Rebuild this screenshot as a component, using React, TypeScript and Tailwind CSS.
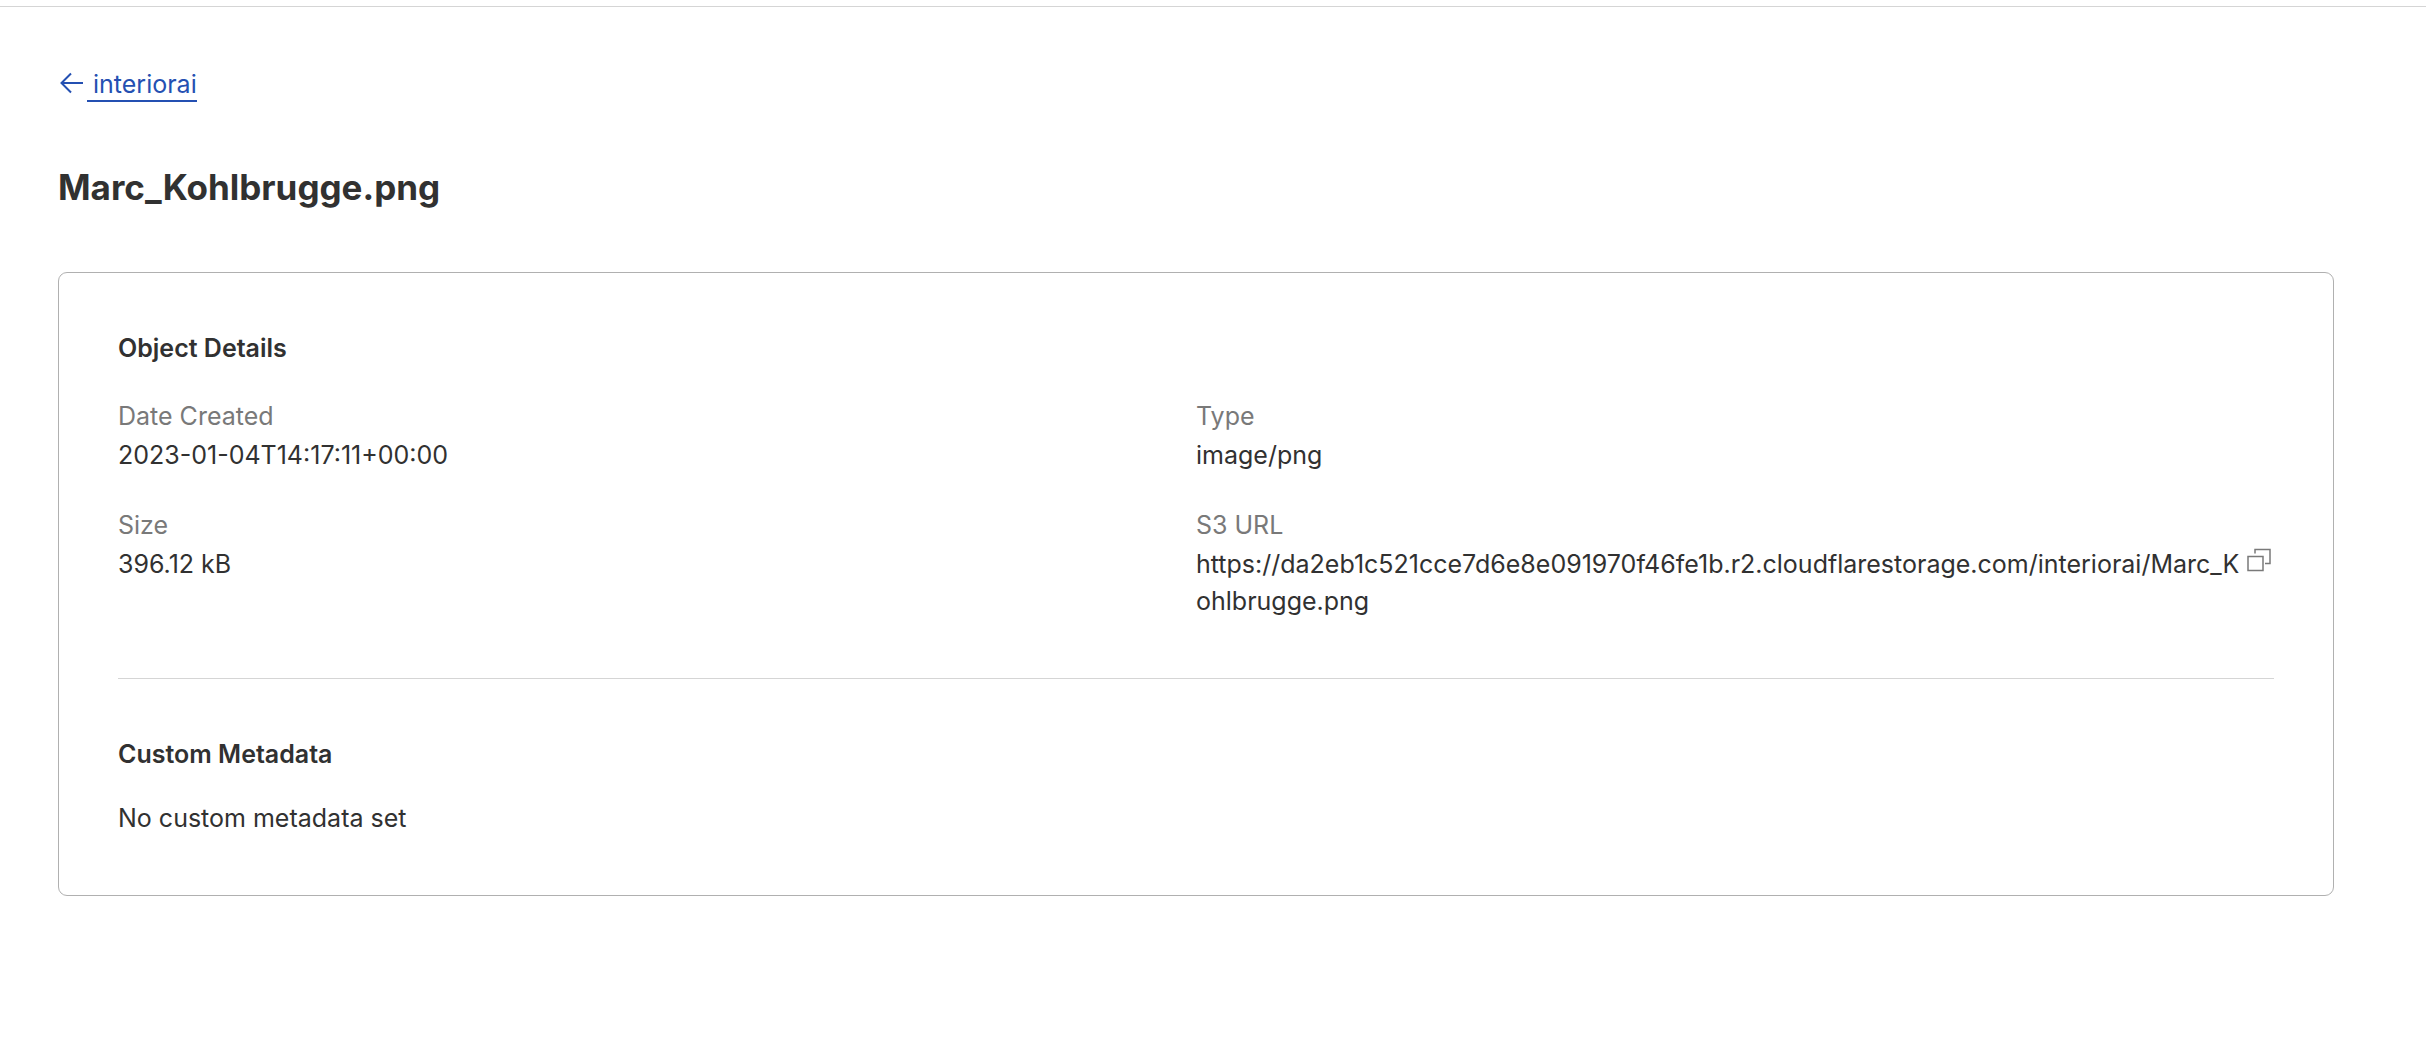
import type { ReactNode } from 'react'

const object = {
  bucket: 'interiorai',
  name: 'Marc_Kohlbrugge.png',
  created: '2023-01-04T14:17:11+00:00',
  type: 'image/png',
  size: '396.12 kB',
  url: 'https://da2eb1c521cce7d6e8e091970f46fe1b.r2.cloudflarestorage.com/interiorai/Marc_Kohlbrugge.png',
}

function ArrowLeft() {
  return (
    <svg width="24" height="22" viewBox="0 0 24 22" fill="none" stroke="currentColor" strokeWidth="2" aria-hidden="true">
      <path d="M12 1.5 2.500 11l9.500 9.500M2.500 11H24" />
    </svg>
  )
}

function CopyIcon() {
  return (
    <svg width="24" height="24" viewBox="0 0 24 24" fill="none" stroke="currentColor" strokeWidth="1.500" aria-hidden="true">
      <path d="M1 8.500h15v14H1z" />
      <path d="M8 5.500V1.500h15v14h-5" />
    </svg>
  )
}

function Field({ label, children }: { label: string; children: ReactNode }) {
  return (
    <div>
      <dt className="mb-0.5 text-[#797979]">{label}</dt>
      <dd>{children}</dd>
    </div>
  )
}

export default function App() {
  const copyUrl = () => navigator.clipboard?.writeText(object.url)

  return (
    <div className="border-t-[6px] border-white bg-white font-['Inter',sans-serif] text-[25px] leading-[37px] text-[#313131]">
      <main className="border-t border-[#d5d5d5] pt-[61px] pr-[92px] pb-16 pl-[58px]">
        <a href="#" className="flex w-fit items-start leading-8 text-[#2450b2]">
          <span className="pt-1 pr-1 pl-px">
            <ArrowLeft />
          </span>
          <span className="border-b-2 border-[#2450b2] pl-1.5">{object.bucket}</span>
        </a>

        <h1 className="mt-[61px] text-[35px] leading-[48px] font-bold">{object.name}</h1>

        <div className="mt-[61px] rounded-[9px] border border-[#b0b0b0] px-[59px]">
          <section className="border-b border-[#d5d5d5] pt-[57px] pb-[58px]">
            <h2 className="font-semibold">Object Details</h2>
            <dl className="mt-[31px] grid grid-cols-2 gap-y-[33px]">
              <Field label="Date Created">{object.created}</Field>
              <Field label="Type">{object.type}</Field>
              <Field label="Size">{object.size}</Field>
              <Field label="S3 URL">
                <div className="flex items-start gap-1">
                  <span className="flex-1 break-all">{object.url}</span>
                  <button type="button" aria-label="Copy S3 URL" onClick={copyUrl} className="pt-0.5 pr-[3px] text-[#797979]">
                    <CopyIcon />
                  </button>
                </div>
              </Field>
            </dl>
          </section>

          <section className="pt-[57px] pb-[58px]">
            <h2 className="font-semibold">Custom Metadata</h2>
            <p className="mt-[27px]">No custom metadata set</p>
          </section>
        </div>
      </main>
    </div>
  )
}
